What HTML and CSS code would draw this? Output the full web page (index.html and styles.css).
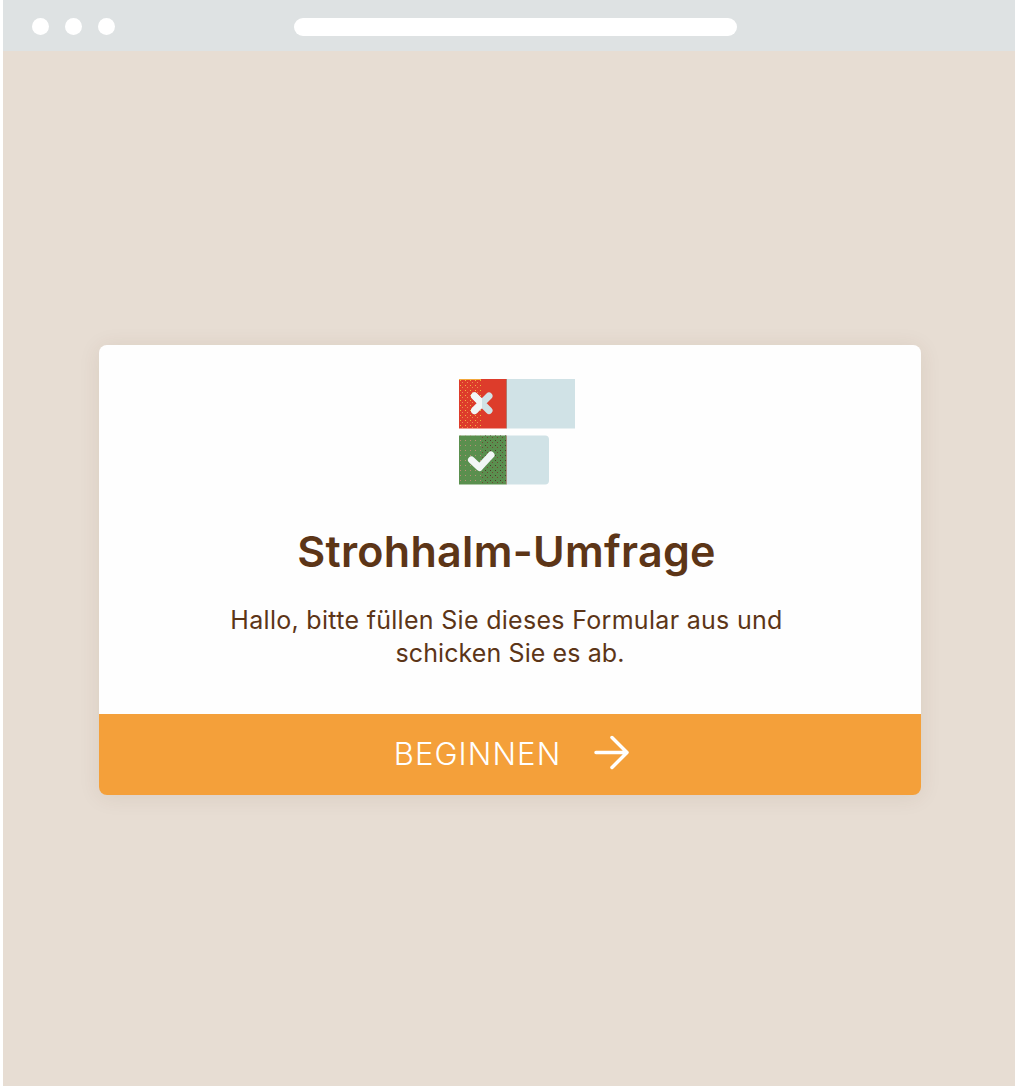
FILE: index.html
```html
<!DOCTYPE html>
<html lang="de">

<head>
    <meta charset="UTF-8">
    <title>Strohhalm-Umfrage</title>
    <link rel="stylesheet" href="styles.css">
</head>

<body>

    <div class="browser">
        <div class="browser-bar">
            <div class="dots">
                <span class="dot"></span>
                <span class="dot"></span>
                <span class="dot"></span>
            </div>
            <div class="url-bar"></div>
        </div>

        <div class="stage">
            <div class="card">
                <div class="card-body">
                    <svg class="poll-icon" width="117" height="106" viewBox="0 0 117 106">
                        <defs>
                            <pattern id="dotsYellow" width="5" height="5" patternUnits="userSpaceOnUse">
                                <rect x="1" y="1" width="1" height="1" fill="#f2b83c"></rect>
                                <rect x="3" y="3" width="1" height="1" fill="#f08a50"></rect>
                            </pattern>
                            <pattern id="dotsPink" width="5" height="5" patternUnits="userSpaceOnUse">
                                <rect x="1" y="1" width="1" height="1" fill="#b98f78"></rect>
                            </pattern>
                            <pattern id="dotsDark" width="5" height="5" patternUnits="userSpaceOnUse">
                                <rect x="1" y="1" width="1" height="1" fill="#4a3a28"></rect>
                                <rect x="3" y="3" width="1" height="1" fill="#6e4a34"></rect>
                            </pattern>
                            <clipPath id="leftHalf">
                                <rect x="0" y="0" width="23" height="50"></rect>
                            </clipPath>
                        </defs>

                        <rect x="47" y="0" width="69" height="49.500" fill="#d0e2e6"></rect>
                        <rect x="0" y="0" width="47" height="49.500" fill="#dd3c2b"></rect>
                        <rect x="0" y="0" width="22" height="49.500" fill="url(#dotsYellow)"></rect>
                        <rect x="0" y="0" width="22" height="1" fill="#f2a83c"></rect>
                        <rect x="47" y="0" width="1" height="49.500" fill="#b0786c"></rect>
                        <path class="mark" d="M15.500 17l14.500 14.500M30 17L15.500 31.500" stroke="#d0e2e6"></path>
                        <path class="mark" d="M15.500 17l14.500 14.500M30 17L15.500 31.500" stroke="#f2f6f6" clip-path="url(#leftHalf)"></path>

                        <path d="M47 56.500h39a4 4 0 0 1 4 4v41a4 4 0 0 1-4 4H47z" fill="#d0e2e6"></path>
                        <rect x="0" y="56.500" width="47" height="49" fill="#5a8f4e"></rect>
                        <rect x="0" y="56.500" width="22" height="49" fill="url(#dotsPink)"></rect>
                        <rect x="22" y="56.500" width="25" height="49" fill="url(#dotsDark)"></rect>
                        <rect x="47" y="56.500" width="1" height="49" fill="#a89080"></rect>
                        <path class="mark" d="M12.500 81l8 7.500 11.500-12.500" stroke="#f2f6f6"></path>
                    </svg>

                    <h1 class="title">Strohhalm-Umfrage</h1>
                    <p class="intro"><span class="intro-first">Hallo, bitte füllen Sie dieses Formular aus und</span><br><span class="intro-second">schicken Sie es ab.</span></p>
                </div>

                <div class="start-btn">
                    <span class="start-label">BEGINNEN</span>
                    <svg class="start-arrow" width="36" height="36" viewBox="0 0 36 36">
                        <path d="M2 17.500h31M18 2.500l15 15-15 15"></path>
                    </svg>
                </div>
            </div>
        </div>
    </div>

</body>

</html>
```

FILE: styles.css
```css
body {
    margin: 0;
    background: #fff;
    font-family: "Inter", "Liberation Sans", sans-serif;
    color: #5c3517;
}

.browser {
    margin-left: 3px;
    height: 1086px;
    display: flex;
    flex-direction: column;
    background: #e7ddd3;
}

.browser-bar {
    height: 51px;
    box-sizing: border-box;
    display: flex;
    align-items: center;
    padding: 2px 0 0 29px;
    background: #dee2e3;
}

.dots {
    display: flex;
    gap: 16px;
    width: 262px;
}

.dot {
    width: 17px;
    height: 17px;
    border-radius: 50%;
    background: #fff;
}

.url-bar {
    width: 443px;
    height: 18px;
    border-radius: 9px;
    background: #fff;
}

.stage {
    display: flex;
    justify-content: center;
    padding: 294px 94px 0 96px;
}

.card {
    width: 822px;
    height: 450px;
    display: flex;
    flex-direction: column;
    border-radius: 8px;
    overflow: hidden;
    box-shadow: 0 2px 22px rgba(92, 53, 23, 0.09);
}

.card-body {
    flex: 1;
    display: flex;
    flex-direction: column;
    align-items: center;
    padding-top: 34px;
    background: #fefefe;
}

.poll-icon {
    display: block;
    margin-left: 15px;
}

.mark {
    fill: none;
    stroke-width: 7;
    stroke-linecap: round;
    stroke-linejoin: round;
}

.title {
    margin: 36px 7px 0 0;
    font-size: 43px;
    line-height: 60px;
    font-weight: 600;
    letter-spacing: 0.3px;
}

.intro {
    margin: 23px 0 0;
    font-size: 25px;
    line-height: 33px;
    letter-spacing: 0.3px;
    text-align: center;
}

.intro-first {
    display: inline-block;
    padding-right: 7px;
}

.intro-second {
    letter-spacing: 0.1px;
}

.start-btn {
    height: 81px;
    box-sizing: border-box;
    display: flex;
    align-items: center;
    justify-content: center;
    gap: 33px;
    padding-left: 4px;
    background: #f4a03a;
    color: #fff;
}

.start-label {
    font-size: 31px;
    font-weight: 300;
    letter-spacing: 1.100px;
    margin-bottom: 2px;
}

.start-arrow {
    display: block;
    margin-bottom: 4px;
}

.start-arrow path {
    fill: none;
    stroke: #fff;
    stroke-width: 3.500;
    stroke-linecap: round;
    stroke-linejoin: round;
}
```
